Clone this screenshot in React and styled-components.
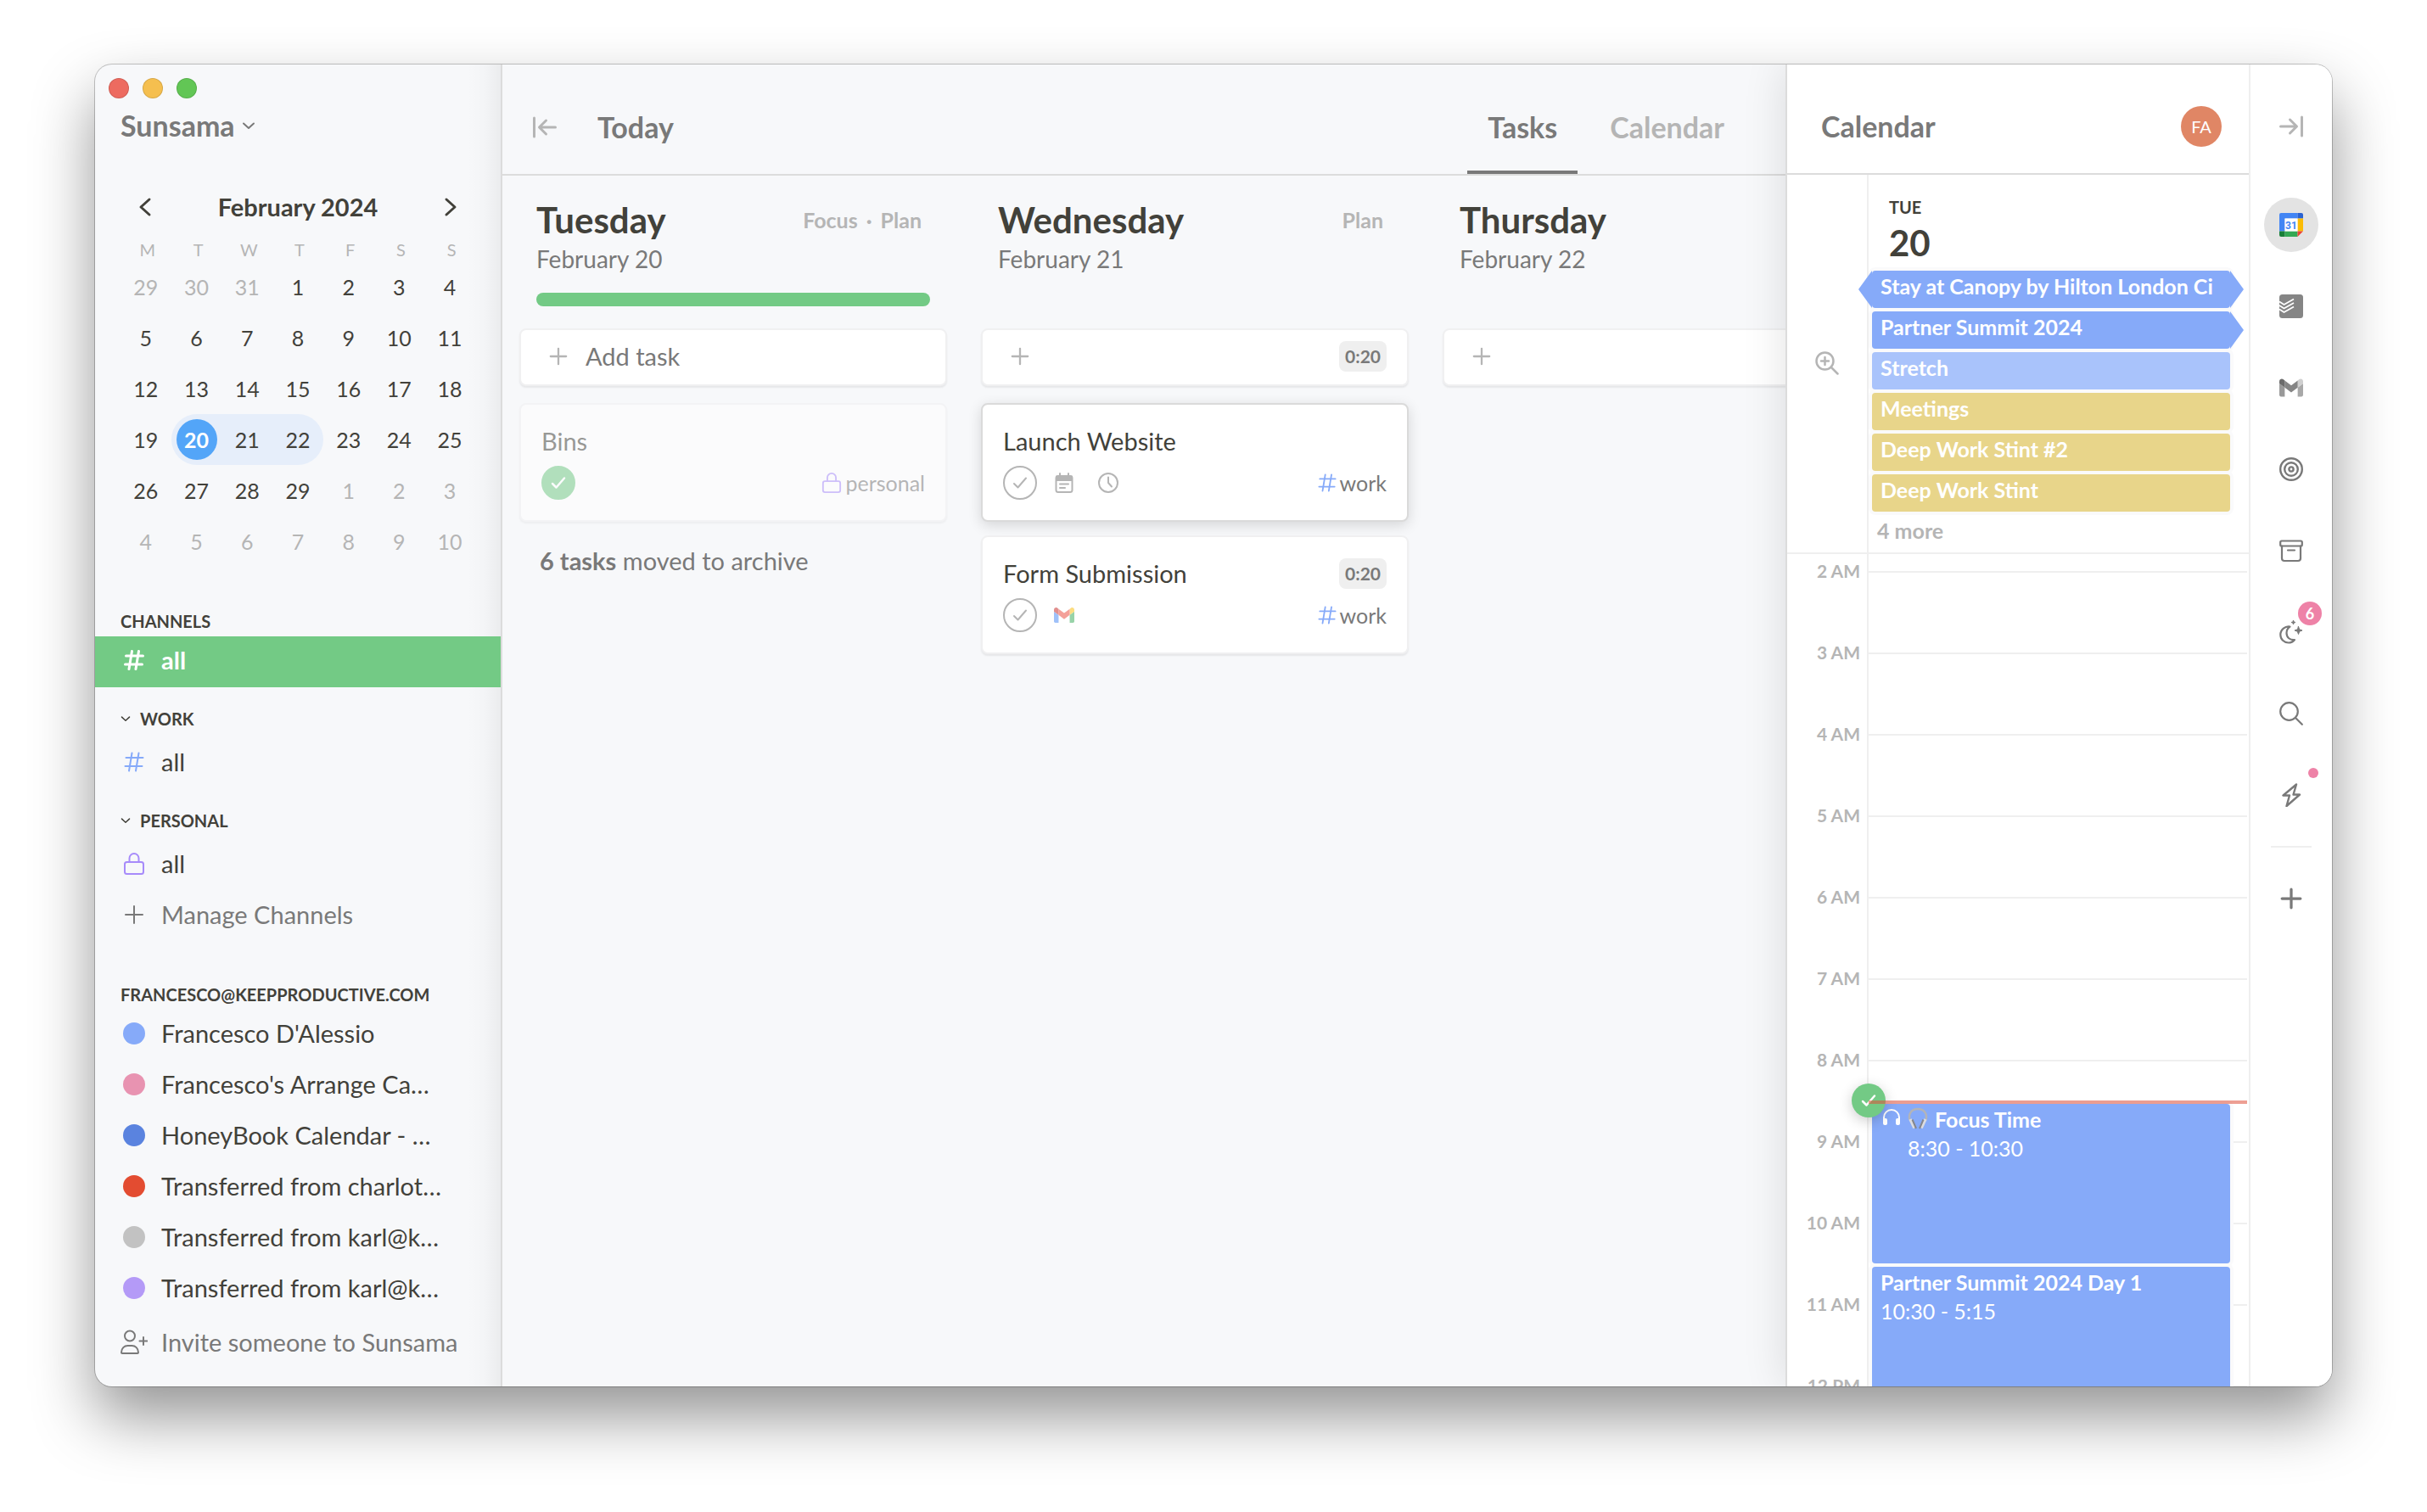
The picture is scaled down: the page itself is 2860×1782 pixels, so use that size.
import React from 'react';
import styled, { createGlobalStyle, css } from 'styled-components';

const colors = {
  dark: '#42413a',
  mid: '#797979',
  light: '#b5b5b5',
  line: '#dcdcdc',
  faint: '#efefef',
  back: '#f7f8fa',
  green: '#73ca85',
  blue: '#86aaf9',
  paleBlue: '#a9c3fb',
  yellow: '#e8d58a',
  purple: '#a78bfa',
  pink: '#ee82a7'
};

const GlobalStyle = createGlobalStyle`
  * {
    box-sizing: border-box;
  }

  body {
    margin: 0;
    background: #fff;
    color: ${colors.dark};
    font-family: Lato, 'Liberation Sans', sans-serif;
    font-size: 29px;
    line-height: 36px;
  }

  button {
    margin: 0;
    padding: 0;
    border: 0;
    background: none;
    color: inherit;
    font: inherit;
    text-align: left;
    cursor: pointer;
  }

  a {
    color: inherit;
    text-decoration: none;
  }

  h1, h2, h3, p {
    margin: 0;
  }

  svg {
    display: block;
    flex: none;
  }
`;

/* icons */

const Icon = ({ size = 24, box = 24, width = 2, children, ...rest }) => (
  <svg
    width={size}
    height={size}
    viewBox={`0 0 ${box} ${box}`}
    fill="none"
    stroke="currentColor"
    strokeWidth={width}
    strokeLinecap="round"
    strokeLinejoin="round"
    aria-hidden="true"
    {...rest}
  >
    {children}
  </svg>
);

const HashIcon = props => (
  <Icon {...props}>
    <path d="M9.5 1.5 6 22.500M17.500 1.500 14 22.500M2.500 7h20M1.500 17h20" />
  </Icon>
);

const LockIcon = props => (
  <Icon box={26} {...props}>
    <rect x="2" y="11" width="22" height="14" rx="2.500" />
    <path d="M7.500 11V6.500a5.500 5.500 0 0 1 11 0V11" />
  </Icon>
);

const PlusIcon = props => (
  <Icon {...props}>
    <path d="M12 2v20M2 12h20" />
  </Icon>
);

const DownIcon = props => (
  <Icon box={16} {...props}>
    <path d="m2 5.500 6 5.500 6-5.500" />
  </Icon>
);

const CheckIcon = props => (
  <Icon box={20} {...props}>
    <path d="m3 11 4.500 4.500L17 4.500" />
  </Icon>
);

const CollapseIcon = ({ flip, ...props }) => (
  <Icon box={28} width={3} {...props}>
    <g transform={flip ? 'translate(28 0) scale(-1 1)' : undefined}>
      <path d="M1.500 3v22M26.500 14H8M15.500 6 7.500 14l8 8" />
    </g>
  </Icon>
);

const InviteIcon = () => (
  <Icon size={32} box={32} width={2}>
    <circle cx="11" cy="8.500" r="6" />
    <path d="M1 28c0-5 3.500-8 7.500-8h5c4 0 7.500 3 7.500 8 0 .600-.400 1-1 1H2c-.600 0-1-.400-1-1zM27 10v9M22.500 14.500h9" />
  </Icon>
);

const PlannedIcon = () => (
  <Icon size={24} width={2}>
    <rect x="2.500" y="4" width="19" height="19" rx="2.500" />
    <path d="M3 4.500h18V9H3z" fill="currentColor" />
    <path d="M7 1v3M17 1v3M7 13.500h10M7 18h6" />
  </Icon>
);

const ClockIcon = () => (
  <Icon size={24} width={2}>
    <circle cx="12" cy="12" r="11" />
    <path d="M12 5.500V12l4 4.500" />
  </Icon>
);

const ZoomInIcon = () => (
  <Icon size={28} box={28} width={2.500}>
    <circle cx="11.500" cy="11.500" r="10" />
    <path d="m19 19 7.500 7.500M11.500 7v9M7 11.500h9" />
  </Icon>
);

const GmailIcon = ({ size = 24, grey, faded }) => {
  const fills = grey
    ? ['#999', '#a8a8a8', '#cfcfcf', '#858585', '#6b6b6b']
    : ['#4285f4', '#34a853', '#fbbc04', '#ea4335', '#c5221f'];
  return (
    <svg
      width={size}
      height={size}
      viewBox="52 31 88 88"
      opacity={faded ? 0.5 : 1}
      aria-hidden="true"
    >
      <path fill={fills[0]} d="M58 108h14V74L52 59v43c0 3.320 2.690 6 6 6" />
      <path fill={fills[1]} d="M120 108h14c3.320 0 6-2.690 6-6V59l-20 15" />
      <path
        fill={fills[2]}
        d="M120 48v26l20-15v-8c0-7.420-8.470-11.650-14.400-7.200"
      />
      <path fill={fills[3]} d="M72 74V48l24 18 24-18v26L96 92" />
      <path
        fill={fills[4]}
        d="M52 51v8l20 15V48l-5.600-4.200c-5.940-4.450-14.400-.220-14.400 7.200"
      />
    </svg>
  );
};

const GoogleCalendarIcon = () => (
  <svg width="28" height="28" viewBox="0 0 28 28" aria-hidden="true">
    <path fill="#4285f4" d="M2 0h19.500v6.500h-15v15H0V2a2 2 0 0 1 2-2z" />
    <path fill="#2a62d2" d="M21.500 0H26a2 2 0 0 1 2 2v4.500h-6.500z" />
    <path fill="#fbbc04" d="M21.500 6.500H28v15h-6.500z" />
    <path fill="#34a853" d="M6.500 21.500h15V28h-15z" />
    <path fill="#188038" d="M0 21.500h6.500V28H2a2 2 0 0 1-2-2z" />
    <path fill="#ea4335" d="M21.500 21.500H28L21.500 28z" />
    <path fill="#fff" d="M6.500 6.500h15v15h-15z" />
    <text
      x="14"
      y="18.500"
      textAnchor="middle"
      fontSize="12"
      fontWeight="700"
      fontFamily="Roboto, sans-serif"
      fill="#4285f4"
    >
      31
    </text>
  </svg>
);

const TodoistIcon = () => (
  <svg width="28" height="28" viewBox="0 0 28 28" aria-hidden="true">
    <rect width="28" height="28" rx="3.500" fill="#858585" />
    <path
      d="M0 8.500 5.500 12 17 5.500M0 13l5.500 3.500L17 10M0 17.500 5.500 21 17 14.500"
      fill="none"
      stroke="#fff"
      strokeWidth="1.800"
    />
  </svg>
);

const TargetIcon = () => (
  <Icon size={28} box={28} width={2.400}>
    <circle cx="14" cy="14" r="12.800" />
    <circle cx="14" cy="14" r="7.800" />
    <circle cx="14" cy="14" r="2.600" />
  </Icon>
);

const ArchiveIcon = () => (
  <Icon size={28} box={28} width={2.200}>
    <rect x="1.200" y="2.500" width="25.600" height="6" rx="1.500" />
    <path d="M3 8.500V23a3 3 0 0 0 3 3h16a3 3 0 0 0 3-3V8.500M10 13.500h8" />
  </Icon>
);

const MoonIcon = () => (
  <Icon size={28} box={28} width={2.200}>
    <path d="M12.500 7.500C7 6.500 1.300 11 1.300 17c0 5.500 4.200 9.500 9.400 9.500 3 0 5.500-1.200 7.300-3.500-5.500.500-9.500-2.500-9.500-8 0-3 1.500-5.800 4-7.500z" />
    <path
      d="m22.500 7.500 1.200 3.300 3.300 1.200-3.300 1.200-1.200 3.300-1.200-3.300L18 12l3.300-1.200zM16.500 0l.600 1.900 1.900.600-1.900.600-.600 1.900-.600-1.900-1.900-.600 1.900-.600z"
      fill="currentColor"
      strokeWidth="1"
    />
  </Icon>
);

const SearchIcon = () => (
  <Icon size={28} box={28} width={2.200}>
    <circle cx="11.500" cy="11.500" r="10.300" />
    <path d="m19 19 7.800 7.800" />
  </Icon>
);

const BoltIcon = () => (
  <Icon size={28} box={28} width={2.400}>
    <path d="M20 1.500 4.500 14.500h7.500L8.500 27 24 13.500h-7.500z" />
  </Icon>
);

const HeadphonesIcon = () => (
  <svg width="22" height="22" viewBox="0 0 22 22" aria-hidden="true">
    <path
      d="M2 14V11a9 9 0 0 1 18 0v3"
      fill="none"
      stroke="#fff"
      strokeWidth="2"
    />
    <rect x="1" y="12" width="5" height="8" rx="2" fill="#fff" />
    <rect x="16" y="12" width="5" height="8" rx="2" fill="#fff" />
  </svg>
);

const HeadphonesEmoji = () => (
  <svg width="24" height="28" viewBox="0 0 24 28" role="img" aria-label="headphones">
    <path
      d="M2.500 15C.500 7 5 2 12 2s11.500 5 9.500 13"
      fill="none"
      stroke="#b3b4b8"
      strokeWidth="2.500"
    />
    <path d="m3 14 5 10.500" stroke="#dcdce0" strokeWidth="3.500" />
    <path d="m21 14-5 10.500" stroke="#dcdce0" strokeWidth="3.500" />
    <path d="m5.500 14.500 4.500 10.500M18.500 14.500 14 25" stroke="#85878e" strokeWidth="2" />
  </svg>
);

/* window */

const Page = styled.div`
  display: flex;
  height: 100vh;
  padding: 76px 112px 148px;
`;

const Window = styled.div`
  display: flex;
  flex: 1;
  min-width: 0;
  overflow: hidden;
  border-radius: 20px;
  background: ${colors.back};
  box-shadow: 0 0 0 1px rgba(0, 0, 0, 0.22), 0 36px 72px rgba(0, 0, 0, 0.42);
`;

/* sidebar */

const Sidebar = styled.aside`
  display: flex;
  flex-direction: column;
  flex: none;
  width: 480px;
  padding-top: 16px;
  border-right: 2px solid ${colors.line};
  background: linear-gradient(
    to left,
    rgba(0, 0, 0, 0.05),
    rgba(0, 0, 0, 0.015) 18px,
    transparent 40px
  );
`;

const Lights = styled.div`
  display: flex;
  gap: 16px;
  padding-left: 16px;
`;

const Light = styled.button`
  width: 24px;
  height: 24px;
  border: 1px solid rgba(0, 0, 0, 0.12);
  border-radius: 50%;
  background: ${props => props.$color};
`;

const Workspace = styled.button`
  display: flex;
  align-items: center;
  gap: 8px;
  height: 40px;
  margin: 12px 0 56px 30px;
  color: ${colors.mid};
  font-size: 34px;
  font-weight: 700;
`;

const Month = styled.div`
  display: flex;
  align-items: center;
  justify-content: space-between;
  height: 40px;
  padding: 0 48px;
  font-weight: 700;
`;

const Days = styled.table`
  width: 418px;
  margin-left: 30px;
  border-collapse: collapse;
  table-layout: fixed;
  text-align: center;
  font-size: 25px;

  th {
    height: 44px;
    padding: 16px 0 0 4px;
    color: ${colors.light};
    font-size: 20px;
    font-weight: 400;
    line-height: 24px;
  }

  td {
    height: 60px;
    padding: 0;
  }
`;

const rangeEnds = {
  start: '30px 0 0 30px',
  middle: '0',
  end: '0 30px 30px 0'
};

const DayCell = styled.td`
  ${props =>
    props.$range &&
    css`
      background: #e6eefa;
      border-radius: ${rangeEnds[props.$range]};
    `}
`;

const DayButton = styled.button`
  width: 48px;
  height: 48px;
  border-radius: 50%;
  text-align: center;
  color: ${props => (props.$outside ? colors.light : colors.dark)};
  ${props =>
    props.$today &&
    css`
      background: #53a5f8;
      color: #fff;
      font-weight: 700;
    `}
`;

const Heading = styled.h2`
  padding-left: 30px;
  font-size: 20px;
  font-weight: 700;
  line-height: 28px;
`;

const Group = styled.button`
  display: flex;
  align-items: center;
  gap: 11px;
  height: 60px;
  padding: 14px 0 0 30px;
  font-size: 20px;
  font-weight: 700;
`;

const Row = styled.a`
  display: flex;
  align-items: center;
  height: 60px;
  padding: 0 30px 4px;
  background: ${props => (props.$active ? colors.green : 'none')};
  color: ${props =>
    props.$active ? '#fff' : props.$muted ? colors.mid : colors.dark};
  font-weight: ${props => (props.$active ? 700 : 400)};
`;

const RowIcon = styled.span`
  display: flex;
  justify-content: center;
  flex: none;
  width: 32px;
  margin-right: 16px;
  color: ${props => props.$color || 'inherit'};
`;

const RowLabel = styled.span`
  overflow: hidden;
  white-space: nowrap;
  text-overflow: ellipsis;
`;

const Dot = styled.span`
  width: 26px;
  height: 26px;
  border-radius: 50%;
  background: ${props => props.$color};
`;

const Nav = styled.nav`
  padding-top: ${props => props.$gap}px;
`;

const weeks = [
  [29, 30, 31, 1, 2, 3, 4],
  [5, 6, 7, 8, 9, 10, 11],
  [12, 13, 14, 15, 16, 17, 18],
  [19, 20, 21, 22, 23, 24, 25],
  [26, 27, 28, 29, 1, 2, 3],
  [4, 5, 6, 7, 8, 9, 10]
];

const calendars = [
  ["Francesco D'Alessio", '#86aaf9'],
  ["Francesco's Arrange Ca…", '#e893b1'],
  ['HoneyBook Calendar - …', '#5a83df'],
  ['Transferred from charlot…', '#e34c31'],
  ['Transferred from karl@k…', '#c2c2c2'],
  ['Transferred from karl@k…', '#b49af7']
];

const isOutside = (day, week) =>
  (week === 0 && day > 7) || (week > 3 && day < 20);

const rangeOf = (day, week) =>
  week === 3 ? { 20: 'start', 21: 'middle', 22: 'end' }[day] : undefined;

const MiniCalendar = () => (
  <>
    <Month>
      <button aria-label="Previous month">
        <Icon size={24} width={3}>
          <path d="M16 3 6 12l10 9" />
        </Icon>
      </button>
      February 2024
      <button aria-label="Next month">
        <Icon size={24} width={3}>
          <path d="m8 3 10 9-10 9" />
        </Icon>
      </button>
    </Month>
    <Days>
      <thead>
        <tr>
          {['M', 'T', 'W', 'T', 'F', 'S', 'S'].map((name, i) => (
            <th key={i}>{name}</th>
          ))}
        </tr>
      </thead>
      <tbody>
        {weeks.map((days, week) => (
          <tr key={week}>
            {days.map(day => (
              <DayCell key={day} $range={rangeOf(day, week)}>
                <DayButton
                  $outside={isOutside(day, week)}
                  $today={week === 3 && day === 20}
                >
                  {day}
                </DayButton>
              </DayCell>
            ))}
          </tr>
        ))}
      </tbody>
    </Days>
  </>
);

const SidebarPanel = () => (
  <Sidebar>
    <Lights>
      <Light $color="#ed6b60" aria-label="Close" />
      <Light $color="#f5bf4f" aria-label="Minimize" />
      <Light $color="#62c655" aria-label="Zoom" />
    </Lights>
    <Workspace>
      Sunsama
      <DownIcon size={16} width={2} />
    </Workspace>
    <MiniCalendar />
    <Nav $gap={50}>
      <Heading>CHANNELS</Heading>
      <Nav $gap={4}>
        <Row href="#all" $active>
          <RowIcon>
            <HashIcon width={3} />
          </RowIcon>
          all
        </Row>
      </Nav>
      <Group>
        <DownIcon size={12} width={2} />
        WORK
      </Group>
      <Row href="#work">
        <RowIcon $color={colors.blue}>
          <HashIcon />
        </RowIcon>
        all
      </Row>
      <Group>
        <DownIcon size={12} width={2} />
        PERSONAL
      </Group>
      <Row href="#personal">
        <RowIcon $color={colors.purple}>
          <LockIcon size={26} />
        </RowIcon>
        all
      </Row>
      <Row href="#manage" $muted>
        <RowIcon>
          <PlusIcon />
        </RowIcon>
        Manage Channels
      </Row>
    </Nav>
    <Nav $gap={48}>
      <Heading>FRANCESCO@KEEPPRODUCTIVE.COM</Heading>
      <Nav $gap={4}>
        {calendars.map(([name, color], i) => (
          <Row href="#calendar" key={i}>
            <RowIcon>
              <Dot $color={color} />
            </RowIcon>
            <RowLabel>{name}</RowLabel>
          </Row>
        ))}
      </Nav>
      <Nav $gap={4}>
        <Row href="#invite" $muted>
          <RowIcon>
            <InviteIcon />
          </RowIcon>
          <RowLabel>Invite someone to Sunsama</RowLabel>
        </Row>
      </Nav>
    </Nav>
  </Sidebar>
);

/* board */

const Board = styled.main`
  display: flex;
  flex-direction: column;
  flex: 1;
  min-width: 0;
  overflow: hidden;
`;

const BoardHeader = styled.header`
  display: flex;
  align-items: stretch;
  flex: none;
  height: 131px;
  padding: 18px 72px 0 36px;
  border-bottom: 2px solid ${colors.line};
  color: ${colors.mid};
  font-size: 34px;
  font-weight: 700;
`;

const Collapse = styled.button`
  color: ${colors.light};
`;

const TodayButton = styled.button`
  margin: 0 auto 0 48px;
`;

const Tab = styled.button`
  padding: 4px 24px 0;
  border-bottom: 4px solid ${props => (props.$active ? colors.mid : 'transparent')};
  color: ${props => (props.$active ? colors.mid : colors.light)};

  & + & {
    padding-left: 38px;
    padding-right: 0;
  }
`;

const Columns = styled.div`
  display: flex;
  gap: 40px;
  flex: 1;
  padding: 26px 20px;
`;

const Column = styled.section`
  flex: none;
  width: 504px;
`;

const ColumnHead = styled.header`
  display: flex;
  flex-wrap: wrap;
  justify-content: space-between;
  align-items: center;
  height: 154px;
  padding: 0 30px 0 20px;
  align-content: flex-start;
`;

const DayName = styled.h1`
  font-size: 42px;
  font-weight: 700;
  line-height: 52px;
`;

const DayLinks = styled.div`
  display: flex;
  gap: 10px;
  color: ${colors.light};
  font-size: 25px;
  font-weight: 700;
`;

const DateLine = styled.p`
  flex: 1 0 100%;
  color: ${colors.mid};
  font-size: 28px;
  line-height: 40px;
`;

const Progress = styled.div`
  flex: 1 0 100%;
  height: 16px;
  margin: 20px -10px 0 0;
  border-radius: 8px;
  background: ${colors.green};
`;

const cardBox = css`
  border: 2px solid ${props => (props.$raised ? '#dadada' : '#f0f0f1')};
  border-radius: 8px;
  background: #fff;
  box-shadow: ${props =>
    props.$raised
      ? '0 4px 16px rgba(0, 0, 0, 0.14)'
      : '0 2px 2px rgba(0, 0, 0, 0.07)'};
`;

const AddTask = styled.button`
  ${cardBox}
  display: flex;
  align-items: center;
  width: 100%;
  height: 68px;
  padding: 0 24px 2px 33px;
  color: ${colors.mid};

  svg {
    margin-right: 21px;
    color: ${colors.light};
  }
`;

const Card = styled.article`
  ${cardBox}
  height: 140px;
  margin-top: ${props => (props.$first ? 20 : 16)}px;
  padding: 18px 24px 0;
  opacity: ${props => (props.$done ? 0.52 : 1)};
`;

const CardRow = styled.div`
  display: flex;
  align-items: center;
  height: ${props => props.$height}px;
`;

const CardTitle = styled.h3`
  flex: 1;
  font-size: 29px;
  font-weight: 400;
`;

const Duration = styled.span`
  margin-left: auto;
  padding: 0 7px;
  border-radius: 8px;
  background: ${colors.faint};
  color: ${colors.mid};
  font-size: 21px;
  font-weight: 700;
`;

const Check = styled.button`
  display: flex;
  align-items: center;
  justify-content: center;
  width: 40px;
  height: 40px;
  border: 2px solid ${props => (props.$done ? colors.green : colors.light)};
  border-radius: 50%;
  background: ${props => (props.$done ? colors.green : 'none')};
  color: ${props => (props.$done ? '#fff' : colors.light)};
`;

const Marks = styled.div`
  display: flex;
  gap: 28px;
  flex: 1;
  padding-left: 20px;
  color: ${colors.light};
`;

const Channel = styled.span`
  display: flex;
  align-items: center;
  gap: 4px;
  color: ${colors.mid};
  font-size: 25px;

  svg {
    color: ${props => props.$color};
  }
`;

const Archived = styled.p`
  padding: 28px 24px;
  color: ${colors.mid};
`;

const TaskCard = ({ title, done, raised, first, duration, marks, channel }) => (
  <Card $raised={raised} $first={first} $done={done}>
    <CardRow $height={50}>
      <CardTitle>{title}</CardTitle>
      {duration && <Duration>{duration}</Duration>}
    </CardRow>
    <CardRow $height={48}>
      <Check $done={done} aria-label={`Complete ${title}`}>
        <CheckIcon size={20} width={done ? 2.5 : 2} />
      </Check>
      <Marks>{marks}</Marks>
      {channel}
    </CardRow>
  </Card>
);

const DayColumn = ({ name, date, links = [], progress, addLabel, total, children }) => (
  <Column>
    <ColumnHead>
      <DayName>{name}</DayName>
      <DayLinks>
        {links.map((link, i) => (
          <React.Fragment key={link}>
            {i > 0 && <span>·</span>}
            <a href={`#${link}`}>{link}</a>
          </React.Fragment>
        ))}
      </DayLinks>
      <DateLine>{date}</DateLine>
      {progress && <Progress />}
    </ColumnHead>
    <AddTask aria-label="Add task">
      <PlusIcon size={22} width={2.5} />
      {addLabel}
      {total && <Duration>{total}</Duration>}
    </AddTask>
    {children}
  </Column>
);

const work = (
  <Channel $color={colors.blue}>
    <HashIcon size={22} />
    work
  </Channel>
);

const BoardPanel = () => (
  <Board>
    <BoardHeader>
      <Collapse aria-label="Collapse sidebar">
        <CollapseIcon size={28} />
      </Collapse>
      <TodayButton>Today</TodayButton>
      <Tab $active>Tasks</Tab>
      <Tab>Calendar</Tab>
    </BoardHeader>
    <Columns>
      <DayColumn
        name="Tuesday"
        date="February 20"
        links={['Focus', 'Plan']}
        addLabel="Add task"
        progress
      >
        <TaskCard
          title="Bins"
          first
          done
          channel={
            <Channel $color={colors.purple}>
              <LockIcon size={24} />
              personal
            </Channel>
          }
        />
        <Archived>
          <b>6 tasks</b> moved to archive
        </Archived>
      </DayColumn>
      <DayColumn name="Wednesday" date="February 21" links={['Plan']} total="0:20">
        <TaskCard
          title="Launch Website"
          first
          raised
          marks={
            <>
              <PlannedIcon />
              <ClockIcon />
            </>
          }
          channel={work}
        />
        <TaskCard
          title="Form Submission"
          duration="0:20"
          marks={<GmailIcon faded />}
          channel={work}
        />
      </DayColumn>
      <DayColumn name="Thursday" date="February 22" />
    </Columns>
  </Board>
);

/* calendar panel */

const HOUR = 96;
const FIRST_HOUR = 2;

const Panel = styled.aside`
  position: relative;
  display: flex;
  flex-direction: column;
  flex: none;
  width: 546px;
  border-left: 2px solid ${colors.line};
  background: #fff;
  box-shadow: 0 0 48px rgba(0, 0, 0, 0.12);
`;

const PanelHeader = styled.header`
  display: flex;
  align-items: center;
  justify-content: space-between;
  flex: none;
  height: 130px;
  padding: 18px 32px 0 40px;
  border-bottom: 2px solid ${colors.line};
  color: ${colors.mid};
  font-size: 34px;
  font-weight: 700;
`;

const Avatar = styled.button`
  width: 48px;
  height: 48px;
  border-radius: 50%;
  background: #e08665;
  color: #fff;
  font-size: 20px;
  font-weight: 400;
  text-align: center;
`;

const AllDay = styled.div`
  display: flex;
  flex: none;
  height: 447px;
  border-bottom: 2px solid ${colors.faint};
`;

const Gutter = styled.div`
  display: flex;
  justify-content: center;
  align-items: flex-start;
  flex: none;
  width: 96px;
  padding-top: 208px;
  border-right: 2px solid ${colors.faint};
  color: ${colors.light};
`;

const AllDayList = styled.div`
  display: flex;
  flex-direction: column;
  gap: 4px;
  flex: 1;
  padding: 24px 22px 0 4px;
`;

const Weekday = styled.div`
  padding-left: 20px;
  font-size: 20px;
  font-weight: 700;
  line-height: 28px;
`;

const DayNumber = styled.div`
  padding-left: 20px;
  font-size: 42px;
  font-weight: 700;
  line-height: 57px;
`;

const AllDayEvent = styled.button`
  position: relative;
  height: 44px;
  padding: 0 10px 8px;
  border-radius: 4px;
  background: ${props => props.$color};
  box-shadow: 0 0 0 4px #fafafb;
  color: #fff;
  font-size: 25px;
  font-weight: 700;
  line-height: 36px;
  white-space: nowrap;

  &::before,
  &::after {
    position: absolute;
    top: 0;
    width: 16px;
    height: 44px;
    background: inherit;
  }

  &::before {
    content: ${props => (props.$from ? "''" : 'none')};
    right: 100%;
    clip-path: polygon(100% 0, 100% 100%, 0 50%);
  }

  &::after {
    content: ${props => (props.$to ? "''" : 'none')};
    left: 100%;
    clip-path: polygon(0 0, 100% 50%, 0 100%);
  }
`;

const More = styled.button`
  padding-left: 6px;
  color: ${colors.light};
  font-size: 25px;
  font-weight: 700;
`;

const Timeline = styled.div`
  position: relative;
  flex: 1;
  min-height: 0;
  overflow: hidden;
`;

const Hour = styled.div`
  display: flex;
  height: ${HOUR}px;
`;

const HourLabel = styled.div`
  width: 96px;
  padding-right: 8px;
  border-right: 2px solid ${colors.faint};
  color: ${colors.light};
  font-size: 21px;
  font-weight: 700;
  line-height: 40px;
  text-align: right;
`;

const HourLine = styled.div`
  flex: 1;
  margin: 20px 2px 0 0;
  border-top: 2px solid ${colors.faint};
`;

const TimedEvent = styled.button`
  position: absolute;
  top: ${props => (props.$start - FIRST_HOUR) * HOUR + 24}px;
  right: 22px;
  left: 100px;
  display: flex;
  align-items: flex-start;
  gap: 8px;
  height: ${props => (props.$end - props.$start) * HOUR - 4}px;
  padding: 1px 10px;
  border-radius: 4px;
  background: ${colors.blue};
  box-shadow: 0 0 0 4px #fafafb;
  color: #fff;
  font-size: 25px;
  line-height: 34px;
`;

const EventName = styled.span`
  display: flex;
  align-items: center;
  gap: 8px;
  font-weight: 700;
`;

const EventIcon = styled.span`
  padding: 4px 0 0 2px;
`;

const NowLine = styled.div`
  position: absolute;
  top: ${props => (props.$at - FIRST_HOUR) * HOUR + 20}px;
  right: 2px;
  left: 96px;
  height: 4px;
  background: rgba(222, 78, 56, 0.54);
`;

const NowCheck = styled.div`
  position: absolute;
  top: ${props => (props.$at - FIRST_HOUR) * HOUR}px;
  left: 76px;
  display: flex;
  align-items: center;
  justify-content: center;
  width: 40px;
  height: 40px;
  border-radius: 50%;
  background: ${colors.green};
  box-shadow: 0 4px 16px rgba(0, 0, 0, 0.2);
  color: #fff;
`;

const hours = [
  '2 AM',
  '3 AM',
  '4 AM',
  '5 AM',
  '6 AM',
  '7 AM',
  '8 AM',
  '9 AM',
  '10 AM',
  '11 AM',
  '12 PM'
];

const CalendarPanel = () => (
  <Panel>
    <PanelHeader>
      Calendar
      <Avatar>FA</Avatar>
    </PanelHeader>
    <AllDay>
      <Gutter>
        <button aria-label="Zoom in">
          <ZoomInIcon />
        </button>
      </Gutter>
      <AllDayList>
        <div>
          <Weekday>TUE</Weekday>
          <DayNumber>20</DayNumber>
        </div>
        <AllDayEvent $color={colors.blue} $from $to>
          Stay at Canopy by Hilton London Ci
        </AllDayEvent>
        <AllDayEvent $color={colors.blue} $to>
          Partner Summit 2024
        </AllDayEvent>
        <AllDayEvent $color={colors.paleBlue}>Stretch</AllDayEvent>
        <AllDayEvent $color={colors.yellow}>Meetings</AllDayEvent>
        <AllDayEvent $color={colors.yellow}>Deep Work Stint #2</AllDayEvent>
        <AllDayEvent $color={colors.yellow}>Deep Work Stint</AllDayEvent>
        <More>4 more</More>
      </AllDayList>
    </AllDay>
    <Timeline>
      {hours.map(label => (
        <Hour key={label}>
          <HourLabel>{label}</HourLabel>
          <HourLine />
        </Hour>
      ))}
      <TimedEvent $start={8.5} $end={10.5}>
        <EventIcon>
          <HeadphonesIcon />
        </EventIcon>
        <span>
          <EventName>
            <HeadphonesEmoji />
            Focus Time
          </EventName>
          8:30 - 10:30
        </span>
      </TimedEvent>
      <TimedEvent $start={10.5} $end={17.25}>
        <span>
          <EventName>Partner Summit 2024 Day 1</EventName>
          10:30 - 5:15
        </span>
      </TimedEvent>
      <NowCheck $at={8.5}>
        <CheckIcon size={20} width={2.5} />
      </NowCheck>
      <NowLine $at={8.5} />
    </Timeline>
  </Panel>
);

/* integrations rail */

const Rail = styled.nav`
  position: relative;
  display: flex;
  flex-direction: column;
  align-items: center;
  flex: none;
  width: 98px;
  padding-top: 41px;
  border-left: 2px solid ${colors.faint};
  background: #fff;
  color: ${colors.mid};
`;

const RailButton = styled.button`
  position: relative;
  display: flex;
  align-items: center;
  justify-content: center;
  width: 64px;
  height: 64px;
  margin-bottom: ${props => props.$gap || 32}px;
  border-radius: 50%;
  background: ${props => (props.$active ? '#e3e3e3' : 'none')};
  color: ${props => (props.$light ? colors.light : 'inherit')};
`;

const Count = styled.span`
  position: absolute;
  top: -4px;
  right: -4px;
  width: 28px;
  height: 28px;
  border-radius: 50%;
  background: ${colors.pink};
  color: #fff;
  font-size: 18px;
  font-weight: 700;
  line-height: 28px;
  text-align: center;
`;

const Unread = styled.span`
  position: absolute;
  top: 0;
  right: 0;
  width: 12px;
  height: 12px;
  border-radius: 50%;
  background: ${colors.pink};
`;

const RailLine = styled.div`
  width: 48px;
  height: 2px;
  margin-bottom: 28px;
  background: ${colors.faint};
`;

const RailPanel = () => (
  <Rail>
    <RailButton $light $gap={52} aria-label="Collapse panel">
      <CollapseIcon size={28} flip />
    </RailButton>
    <RailButton $active aria-label="Google Calendar">
      <GoogleCalendarIcon />
    </RailButton>
    <RailButton aria-label="Todoist">
      <TodoistIcon />
    </RailButton>
    <RailButton aria-label="Gmail">
      <GmailIcon size={28} grey />
    </RailButton>
    <RailButton aria-label="Objectives">
      <TargetIcon />
    </RailButton>
    <RailButton aria-label="Archive">
      <ArchiveIcon />
    </RailButton>
    <RailButton aria-label="Backlog">
      <MoonIcon />
      <Count>6</Count>
    </RailButton>
    <RailButton aria-label="Search">
      <SearchIcon />
    </RailButton>
    <RailButton $gap={28} aria-label="Updates">
      <BoltIcon />
      <Unread />
    </RailButton>
    <RailLine />
    <RailButton aria-label="Add integration">
      <PlusIcon size={26} width={3} />
    </RailButton>
  </Rail>
);

const App = () => (
  <Page>
    <GlobalStyle />
    <Window>
      <SidebarPanel />
      <BoardPanel />
      <CalendarPanel />
      <RailPanel />
    </Window>
  </Page>
);

export default App;
